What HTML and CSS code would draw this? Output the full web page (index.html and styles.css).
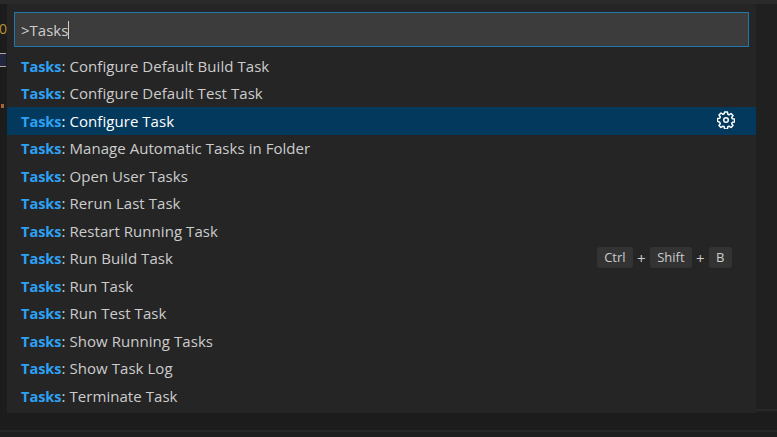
FILE: index.html
```html
<!doctype html>
<html lang="en">
  <head>
    <meta charset="UTF-8" />
    <title>Command Palette</title>
    <link rel="stylesheet" href="styles.css">
  </head>
  <body>
    <div class="editor">
      <div class="gutter">
        <span class="gutter-num">0:</span>
        <span class="gutter-tag"></span>
        <span class="gutter-mark"></span>
      </div>

      <div class="palette">
        <div class="input-box">
          <span class="input-text">&gt;Tasks</span><span class="caret"></span>
        </div>
        <ul class="list">
          <li class="row"><span class="label"><b>Tasks</b>: Configure Default Build Task</span></li>
          <li class="row"><span class="label"><b>Tasks</b>: Configure Default Test Task</span></li>
          <li class="row active">
            <span class="label"><b>Tasks</b>: Configure Task</span>
            <svg class="gear" viewBox="0 0 18 18" width="18" height="18" fill="none" stroke="#fff" stroke-width="1.5" stroke-linejoin="round">
              <path d="M7.6 1h2.8l.4 2.2 1.3.6 1.9-1.3 2 2-1.3 1.9.6 1.3 2.2.4v2.8l-2.2.4-.6 1.3 1.3 1.9-2 2-1.9-1.3-1.3.6-.4 2.2H7.6l-.4-2.2-1.3-.6-1.9 1.3-2-2 1.3-1.9-.6-1.3L.5 10.4V7.6l2.2-.4.6-1.3-1.3-1.9 2-2 1.9 1.3 1.3-.6z"/>
              <circle cx="9" cy="9" r="2.3"/>
            </svg>
          </li>
          <li class="row"><span class="label"><b>Tasks</b>: Manage Automatic Tasks in Folder</span></li>
          <li class="row"><span class="label"><b>Tasks</b>: Open User Tasks</span></li>
          <li class="row"><span class="label"><b>Tasks</b>: Rerun Last Task</span></li>
          <li class="row"><span class="label"><b>Tasks</b>: Restart Running Task</span></li>
          <li class="row">
            <span class="label"><b>Tasks</b>: Run Build Task</span>
            <span class="keys">
              <kbd>Ctrl</kbd><i>+</i><kbd>Shift</kbd><i>+</i><kbd>B</kbd>
            </span>
          </li>
          <li class="row"><span class="label"><b>Tasks</b>: Run Task</span></li>
          <li class="row"><span class="label"><b>Tasks</b>: Run Test Task</span></li>
          <li class="row"><span class="label"><b>Tasks</b>: Show Running Tasks</span></li>
          <li class="row"><span class="label"><b>Tasks</b>: Show Task Log</span></li>
          <li class="row"><span class="label"><b>Tasks</b>: Terminate Task</span></li>
        </ul>
      </div>

      <div class="right-strip"></div>
    </div>
    <div class="bottom-panel"></div>
  </body>
</html>
```

FILE: styles.css
```css
* {
  box-sizing: border-box;
}

html,
body {
  margin: 0;
  height: 100%;
}

body {
  width: 777px;
  height: 437px;
  overflow: hidden;
  background: #1e1e1e;
  font-family: "Open Sans", "Noto Sans", sans-serif;
  display: flex;
  flex-direction: column;
}

.editor {
  display: flex;
  height: 413px;
  border-top: 4px solid #2a2a2a;
}

.gutter {
  width: 7px;
  background: #1c1c1c;
  position: relative;
  overflow: hidden;
}

.gutter-num {
  position: absolute;
  top: 15px;
  left: -1px;
  font-size: 14px;
  color: #b8912f;
}

.gutter-tag {
  position: absolute;
  top: 49px;
  left: 0;
  width: 6px;
  height: 14px;
  background: #23263f;
  border-top: 1px solid #aaa;
  border-bottom: 1px solid #aaa;
}

.gutter-mark {
  position: absolute;
  top: 100px;
  left: 1px;
  width: 3px;
  height: 4px;
  background: #a8642f;
}

.palette {
  width: 749px;
  background: #252526;
  padding-top: 8px;
}

.input-box {
  margin: 0 7px;
  height: 35px;
  display: flex;
  align-items: center;
  padding-left: 6px;
  background: #3c3c3c;
  border: 1px solid #1f78ab;
  color: #ccc;
  font-size: 15px;
}

.caret {
  width: 1px;
  height: 18px;
  background: #d0d0d0;
}

.list {
  list-style: none;
  margin: 5px 0 0;
  padding: 0;
}

.row {
  height: 27.5px;
  display: flex;
  align-items: center;
  justify-content: space-between;
  padding: 0 22px 0 14px;
  font-size: 15px;
  letter-spacing: 0.05px;
  color: #ccc;
}

.row b {
  font-size: 14.5px;
  letter-spacing: 0;
  color: #2da2f5;
  font-weight: 700;
}

.active {
  background: #04395e;
  color: #fff;
}

.gear {
  margin-right: -1px;
  margin-bottom: 1px;
}

.keys {
  display: flex;
  align-items: center;
  gap: 4px;
  margin-right: 2px;
  font-size: 13px;
  letter-spacing: 0;
  color: #ccc;
}

.keys i {
  font-style: normal;
  font-size: 15px;
  line-height: 1;
}

kbd {
  font: inherit;
  height: 22px;
  line-height: 21px;
  padding: 0 7.5px;
  background: #333334;
  border-bottom: 1px solid #222;
  border-radius: 3px;
}

.right-strip {
  flex: 1;
  margin-bottom: 2px;
  background: #202020;
  border-bottom: 2px solid #282828;
}

.bottom-panel {
  flex: 1;
  background: #1c1c1c;
  border-bottom: 5px solid #1e1e1e;
  box-shadow: inset 0 -2px 0 #262626;
}
```
